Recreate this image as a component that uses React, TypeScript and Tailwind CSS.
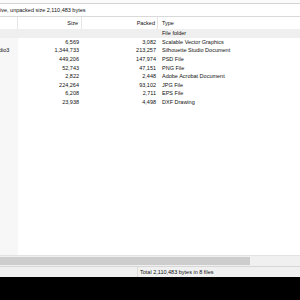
import React from "react";

const rows = [
  { name: "", size: "", packed: "", type: "File folder", band: true },
  { name: "", size: "6,569", packed: "3,082", type: "Scalable Vector Graphics" },
  { name: "Design.studio3", size: "1,344,733", packed: "213,257", type: "Silhouette Studio Document" },
  { name: "", size: "449,206", packed: "147,974", type: "PSD File" },
  { name: "", size: "52,743", packed: "47,151", type: "PNG File" },
  { name: "", size: "2,822", packed: "2,448", type: "Adobe Acrobat Document" },
  { name: "", size: "224,264", packed: "93,102", type: "JPG File" },
  { name: "", size: "6,208", packed: "2,711", type: "EPS File" },
  { name: "", size: "23,938", packed: "4,498", type: "DXF Drawing" },
];

export default function App() {
  return (
    <div
      className="w-[300px] h-[300px] bg-black flex flex-col overflow-hidden text-[5.5px] text-[#111]"
      style={{ fontFamily: '"Liberation Sans", Arial, sans-serif' }}
    >
      <div className="h-[4px] bg-[#fbfbfb] border-b border-[#d4d4d4] shrink-0" />
      <div className="h-[13px] bg-white border-b border-[#d9d9d9] flex items-center shrink-0 whitespace-nowrap">
        <span>ive, unpacked size 2,110,483 bytes</span>
      </div>
      <div className="flex-1 bg-white flex flex-col min-h-0">
        <div className="h-[12px] flex items-center shrink-0 bg-white">
          <div className="w-[18px] h-full border-r border-[#e5e5e5]" />
          <div className="w-[64px] h-full border-r border-[#e5e5e5] flex items-center justify-end pr-[3px]">Size</div>
          <div className="w-[76px] h-full border-r border-[#e5e5e5] flex items-center justify-end pr-[2px]">Packed</div>
          <div className="flex-1 h-full flex items-center pl-[4px]">Type</div>
        </div>
        <div className="flex-1 flex flex-col relative">
          <div className="flex flex-1">
            <div className="w-[18px] bg-[#f7f7f7]" />
            <div className="flex-1" />
          </div>
          <div className="absolute inset-0 flex flex-col">
            {rows.map((r, i) => (
              <div
                key={i}
                className={`h-[8.6px] flex items-center whitespace-nowrap ${r.band ? "bg-[#efefef]" : ""}`}
              >
                <div className="w-[18px] overflow-hidden h-full flex items-center">
                  {r.name && <span className="ml-[-27px]">{r.name}</span>}
                </div>
                <div className="w-[64px] text-right pr-[3px]">{r.size}</div>
                <div className="w-[76px] text-right pr-[2px]">{r.packed}</div>
                <div className="flex-1 pl-[4px]">{r.type}</div>
              </div>
            ))}
          </div>
        </div>
      </div>
      <div className="h-[11px] bg-[#f0f0f0] border-t border-[#e3e3e3] flex items-center shrink-0">
        <div className="w-[250px] h-[8px] bg-[#cdcdcd]" />
      </div>
      <div className="h-[11px] bg-[#f0f0f0] border-t border-[#d7d7d7] flex items-center shrink-0 whitespace-nowrap">
        <div className="w-[138px] h-full border-r border-[#dcdcdc]" />
        <span className="pl-[2px]">Total 2,110,483 bytes in 8 files</span>
      </div>
      <div className="h-[23px] bg-black shrink-0" />
    </div>
  );
}
